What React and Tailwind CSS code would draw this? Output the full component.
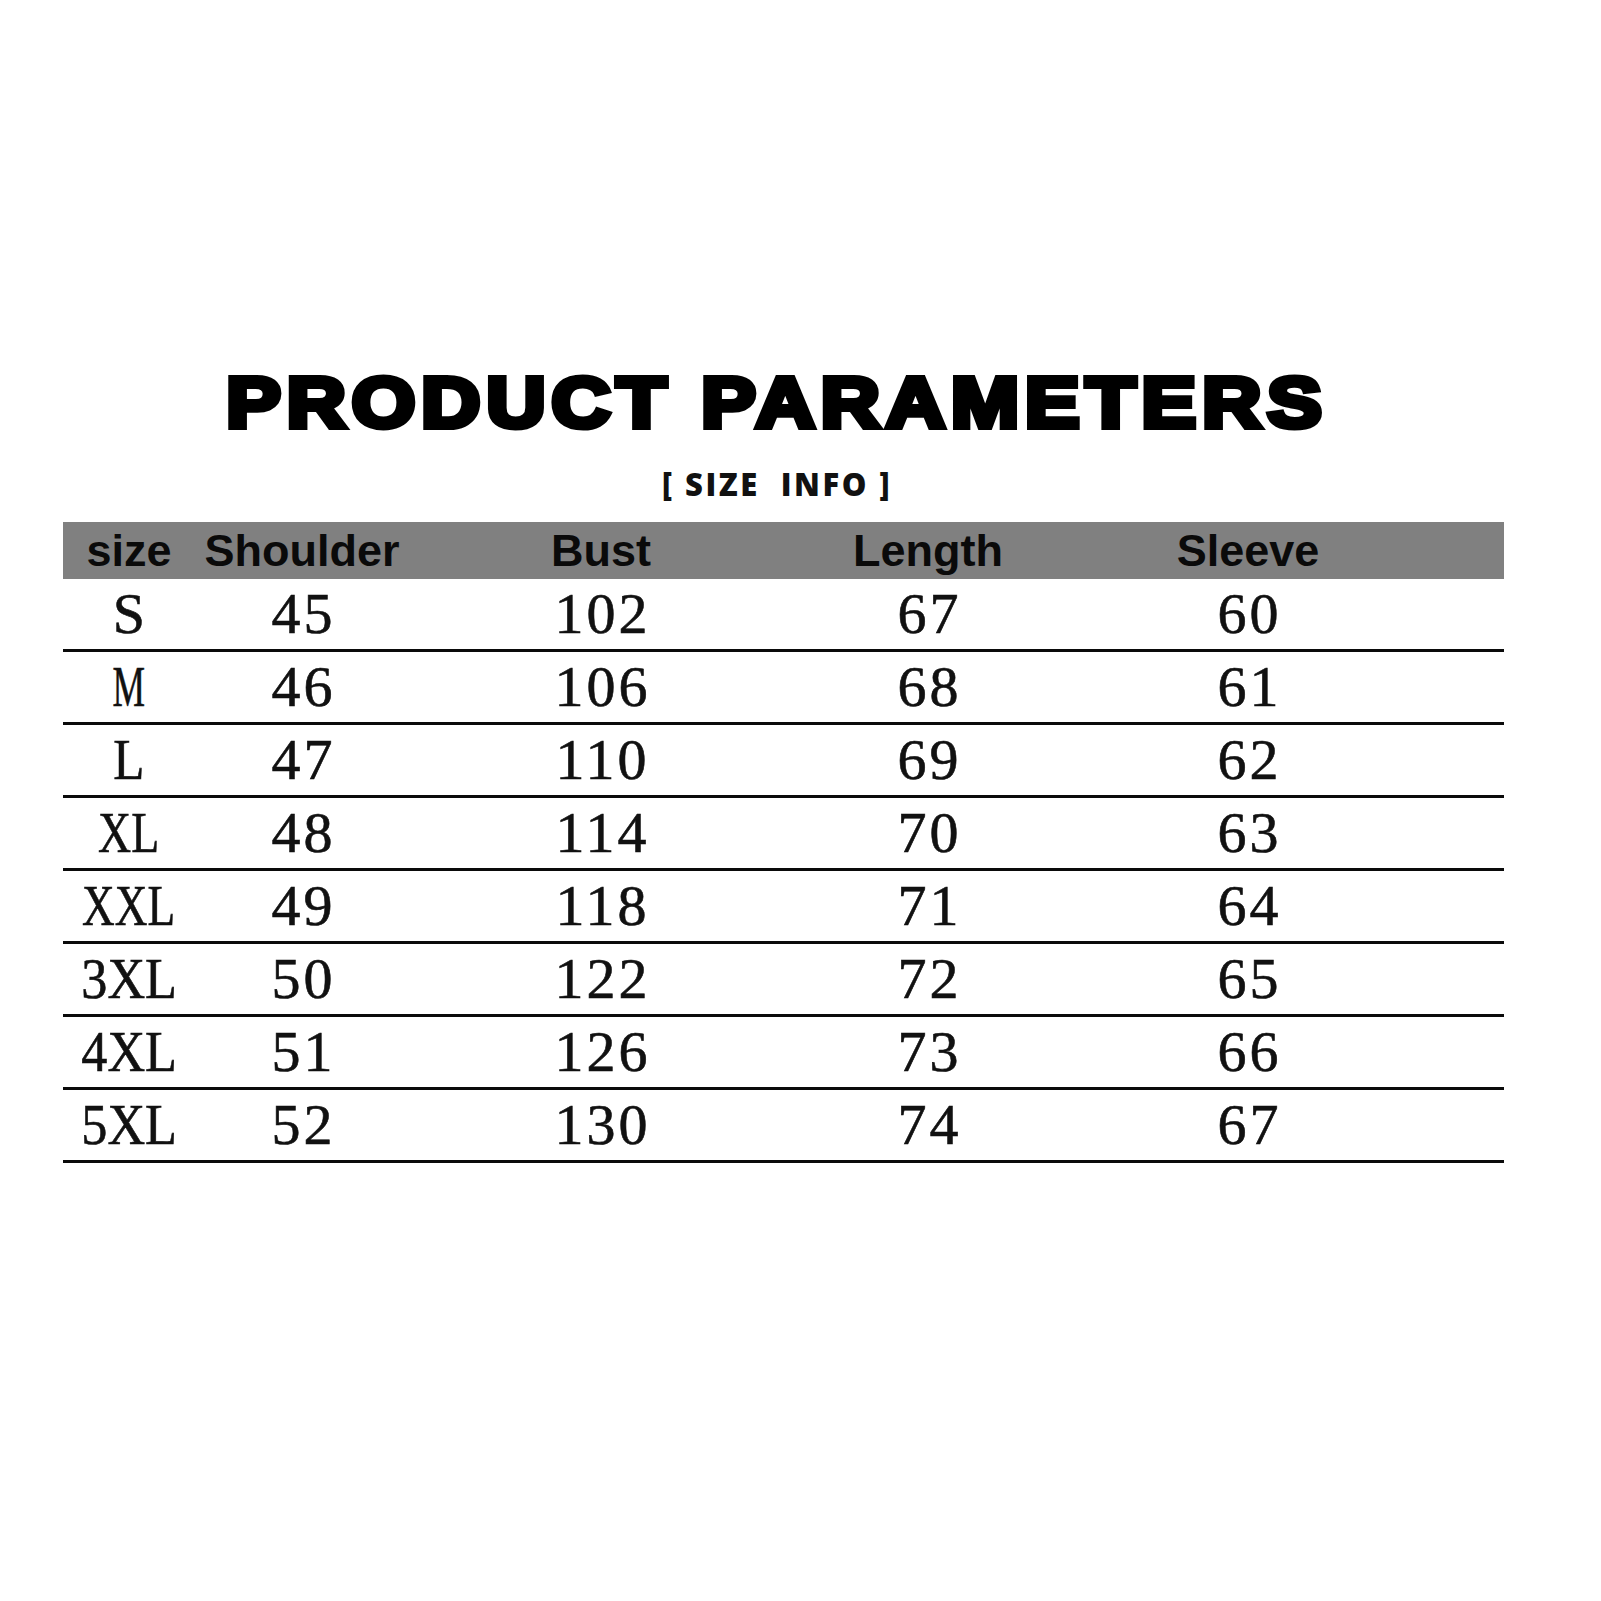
import React from "react";

const rows = [
  ["S", "45", "102", "67", "60"],
  ["M", "46", "106", "68", "61"],
  ["L", "47", "110", "69", "62"],
  ["XL", "48", "114", "70", "63"],
  ["XXL", "49", "118", "71", "64"],
  ["3XL", "50", "122", "72", "65"],
  ["4XL", "51", "126", "73", "66"],
  ["5XL", "52", "130", "74", "67"],
];

const headers = ["size", "Shoulder", "Bust", "Length", "Sleeve"];

const labelScale = {
  S: "",
  M: "scale-x-[0.63]",
  L: "scale-x-[0.88]",
  XL: "scale-x-[0.79]",
  XXL: "scale-x-[0.78]",
  "3XL": "scale-x-[0.9]",
  "4XL": "scale-x-[0.9]",
  "5XL": "scale-x-[0.9]",
};

export default function App() {
  return (
    <div className="w-[1601px] h-[1601px] bg-white overflow-hidden">
      <div className="pt-[367px] ml-[227px] w-[1100px] flex flex-col items-center">
        <h1 className="font-['Liberation_Sans',Arial,sans-serif] font-bold text-[71px] leading-none tracking-[5.3px] text-black whitespace-nowrap scale-x-[1.15] [-webkit-text-stroke:6px_#000]">
          PRODUCT PARAMETERS
        </h1>
        <div className="mt-[31px] font-['Open_Sans',sans-serif] font-extrabold text-[31px] leading-none tracking-[2.5px] text-[#111] whitespace-pre">
          {"[ SIZE  INFO ]"}
        </div>
      </div>

      <div className="mt-[22px] ml-[63px] w-[1441px]">
        <div className="grid grid-cols-[132px_214px_384px_270px_370px_1fr] h-[57px] bg-[#808080] items-center font-['Liberation_Sans',Arial,sans-serif] font-bold text-[45px] leading-[57px] text-[#0a0a0a]">
          {headers.map((h) => (
            <div key={h} className="text-center whitespace-nowrap">
              {h}
            </div>
          ))}
          <div />
        </div>
        {rows.map((r) => (
          <div
            key={r[0]}
            className="grid grid-cols-[132px_214px_384px_270px_370px_1fr] h-[73px] border-b-[3px] border-[#0a0a0a] items-center font-['Liberation_Serif','Times_New_Roman',serif] text-[58px] leading-[70px] text-[#111] [-webkit-text-stroke:0.6px_#111]"
          >
            <div className="flex justify-center">
              <span className={`inline-block whitespace-nowrap ${labelScale[r[0]]}`}>
                {r[0]}
              </span>
            </div>
            {r.slice(1).map((v, i) => (
              <div key={i} className="text-center tracking-[3px] pl-[3px]">
                {v}
              </div>
            ))}
            <div />
          </div>
        ))}
      </div>
    </div>
  );
}
